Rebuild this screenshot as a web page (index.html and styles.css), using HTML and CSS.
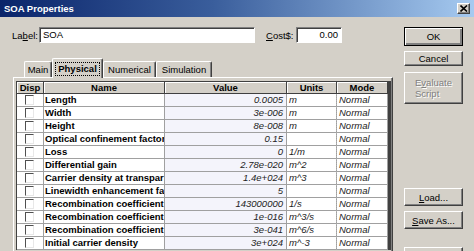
FILE: index.html
```html
<!DOCTYPE html>
<html lang="en">
<head>
    <meta charset="UTF-8">
    <title>SOA Properties</title>
    <link rel="stylesheet" href="styles.css">
</head>
<body>
    <div class="window">
        <div class="titlebar">
            <span class="title">SOA Properties</span>
            <span class="close">
                <svg width="8" height="7" viewBox="0 0 8 7"><path d="M0.5 0.5 L7 6.5 M7 0.5 L0.5 6.5" stroke="#000" stroke-width="1.6"/></svg>
            </span>
        </div>
        <div class="content">
            <div class="main">
                <div class="label-row">
                    <span class="lbl">La<u>b</u>el:</span>
                    <div class="field field-label">SOA</div>
                    <span class="lbl lbl-cost"><u>C</u>ost$:</span>
                    <div class="field field-cost">0.00</div>
                </div>
                <div class="tabs">
                    <div class="tab tab-main">Main</div>
                    <div class="tab tab-phys active"><span class="focus">Physical</span></div>
                    <div class="tab tab-num">Numerical</div>
                    <div class="tab tab-sim">Simulation</div>
                </div>
                <div class="panel">
                    <div class="grid">
                        <div class="hd">Disp</div>
                        <div class="hd">Name</div>
                        <div class="hd">Value</div>
                        <div class="hd">Units</div>
                        <div class="hd">Mode</div>

                        <div class="c disp"><i class="chk"></i></div><div class="c name">Length</div><div class="c val">0.0005</div><div class="c unit">m</div><div class="c mode">Normal</div>
                        <div class="c disp"><i class="chk"></i></div><div class="c name">Width</div><div class="c val">3e-006</div><div class="c unit">m</div><div class="c mode">Normal</div>
                        <div class="c disp"><i class="chk"></i></div><div class="c name">Height</div><div class="c val">8e-008</div><div class="c unit">m</div><div class="c mode">Normal</div>
                        <div class="c disp"><i class="chk"></i></div><div class="c name">Optical confinement factor</div><div class="c val">0.15</div><div class="c unit"></div><div class="c mode">Normal</div>
                        <div class="c disp"><i class="chk"></i></div><div class="c name">Loss</div><div class="c val">0</div><div class="c unit">1/m</div><div class="c mode">Normal</div>
                        <div class="c disp"><i class="chk"></i></div><div class="c name">Differential gain</div><div class="c val">2.78e-020</div><div class="c unit">m^2</div><div class="c mode">Normal</div>
                        <div class="c disp"><i class="chk"></i></div><div class="c name">Carrier density at transpar</div><div class="c val">1.4e+024</div><div class="c unit">m^3</div><div class="c mode">Normal</div>
                        <div class="c disp"><i class="chk"></i></div><div class="c name">Linewidth enhancement fa</div><div class="c val">5</div><div class="c unit"></div><div class="c mode">Normal</div>
                        <div class="c disp"><i class="chk"></i></div><div class="c name">Recombination coefficient</div><div class="c val">143000000</div><div class="c unit">1/s</div><div class="c mode">Normal</div>
                        <div class="c disp"><i class="chk"></i></div><div class="c name">Recombination coefficient</div><div class="c val">1e-016</div><div class="c unit">m^3/s</div><div class="c mode">Normal</div>
                        <div class="c disp"><i class="chk"></i></div><div class="c name">Recombination coefficient</div><div class="c val">3e-041</div><div class="c unit">m^6/s</div><div class="c mode">Normal</div>
                        <div class="c disp"><i class="chk"></i></div><div class="c name">Initial carrier density</div><div class="c val">3e+024</div><div class="c unit">m^-3</div><div class="c mode">Normal</div>
                    </div>
                </div>
            </div>
            <div class="side">
                <div class="btn btn-ok">OK</div>
                <div class="btn btn-cancel">Cancel</div>
                <div class="btn btn-eval"><span>E<u>v</u>aluate<br>Script</span></div>
                <div class="btn btn-load"><span><u>L</u>oad...</span></div>
                <div class="btn btn-save"><span><u>S</u>ave As...</span></div>
                <div class="btn btn-sec">Security</div>
            </div>
        </div>
    </div>
</body>
</html>
```

FILE: styles.css
```css
* { margin: 0; padding: 0; box-sizing: border-box; }
html, body { width: 474px; height: 251px; overflow: hidden; }
body {
    background: #d4d0c8;
    font-family: "Liberation Sans", Arial, sans-serif;
    font-size: 9.5px;
    color: #000; }

.window { display: flex; flex-direction: column; height: 251px; }

.titlebar {
    height: 17px;
    display: flex;
    align-items: center;
    justify-content: space-between;
    padding: 0 4px 0 4px;
    background: linear-gradient(to right, #0a246a, #3a5e9c 45%, #a6caf0); }
.title { color: #fff; font-weight: bold; font-size: 9.5px; }
.close {
    width: 13px; height: 11px;
    display: flex; align-items: center; justify-content: center;
    background: #d4d0c8;
    border: 1px solid;
    border-color: #fff #404040 #404040 #fff;
    box-shadow: inset -1px -1px #808080; }

.content { display: flex; flex: 1; overflow: hidden; }
.main { width: 395px; }

.label-row {
    display: flex;
    align-items: center;
    height: 16px;
    margin-top: 10px;
    padding-left: 12px; }
.lbl { width: 27px; }
.lbl-cost { width: 30px; margin-left: 11px; }
.field {
    height: 16px;
    background: #fff;
    border: 1px solid;
    border-color: #808080 #fff #fff #808080;
    box-shadow: inset 1px 1px #404040;
    line-height: 14px;
    padding: 0 3px; }
.field-label { width: 216px; }
.field-cost { width: 46px; text-align: right; }

.tabs {
    display: flex;
    align-items: flex-end;
    height: 19px;
    margin-top: 15px;
    padding-left: 24px; }
.tab {
    height: 16px;
    border: 1px solid;
    border-bottom: 0;
    border-color: #fff #404040 #fff #fff;
    border-radius: 2px 2px 0 0;
    box-shadow: inset -1px 0 #808080;
    text-align: center;
    line-height: 15px; }
.tab-main { width: 28px; }
.tab-phys { width: 51px; }
.tab-num { width: 53px; }
.tab-sim { width: 56px; }
.tab.active {
    height: 20px;
    margin-bottom: -1px;
    position: relative;
    z-index: 1;
    background: #d4d0c8;
    font-weight: bold;
    padding-top: 2px; }
.focus {
    display: inline-block;
    border: 1px dotted #000;
    line-height: 12px;
    padding: 0 2px; }

.panel {
    width: 380px;
    height: 200px;
    margin-left: 13px;
    border: 1px solid;
    border-bottom: 0;
    border-color: #fff #404040 #fff #fff;
    box-shadow: inset -1px 0 #808080;
    padding: 3px 0 0 2px; }

.grid {
    display: grid;
    grid-template-columns: 27px 121px 122px 50px 51px;
    grid-template-rows: 12px;
    grid-auto-rows: 13px;
    width: 375px;
    border-left: 1px solid #404040;
    border-top: 1px solid #404040;
    border-right: 3px solid #404040;
    background: #fff; }
.hd {
    background: #d4d0c8;
    border-right: 1px solid #404040;
    border-bottom: 1px solid #404040;
    box-shadow: inset 1px 1px #fff;
    font-weight: bold;
    text-align: center;
    line-height: 11px; }
.hd:last-child, .mode { border-right: 0; }
.c {
    border-right: 1px solid #a0a0a0;
    border-bottom: 1px solid #a0a0a0;
    line-height: 12px;
    white-space: nowrap;
    overflow: hidden; }
.disp { display: flex; align-items: center; justify-content: center; padding-right: 2px; }
.chk {
    width: 9px; height: 10px;
    border: 1px solid;
    border-color: #505050 #e8e8e8 #e8e8e8 #505050;
    background: #fff; }
.name { font-weight: bold; padding-left: 1px; }
.val { font-style: italic; text-align: right; padding-right: 3px; background: #f4f4fb; color: #222; }
.unit { font-style: italic; padding-left: 2px; color: #222; }
.mode { font-style: italic; padding-left: 2px; color: #222; border-left: 1px dotted #b0b0b0; margin-left: -1px; }

.side {
    width: 79px;
    padding: 10px 0 0 9px;
    overflow: hidden; }
.btn {
    width: 59px;
    height: 18px;
    display: flex;
    align-items: center;
    justify-content: center;
    background: #d4d0c8;
    border: 1px solid;
    border-color: #fff #404040 #404040 #fff;
    box-shadow: inset -1px -1px #808080; }
.btn-ok {
    height: 19px;
    border-color: #000;
    box-shadow: inset 1px 1px #fff, inset -2px -2px #808080; }
.btn-cancel { height: 15px; margin-top: 5px; }
.btn-eval {
    height: 32px;
    margin-top: 6px;
    justify-content: flex-start;
    padding-left: 10px;
    line-height: 11px;
    color: #808080;
    text-shadow: 1px 1px #fff; }
.btn-load { margin-top: 84px; }
.btn-save { margin-top: 5px; }
.btn-sec { margin-top: 18px; align-items: flex-start; padding-top: 1px; }
```
